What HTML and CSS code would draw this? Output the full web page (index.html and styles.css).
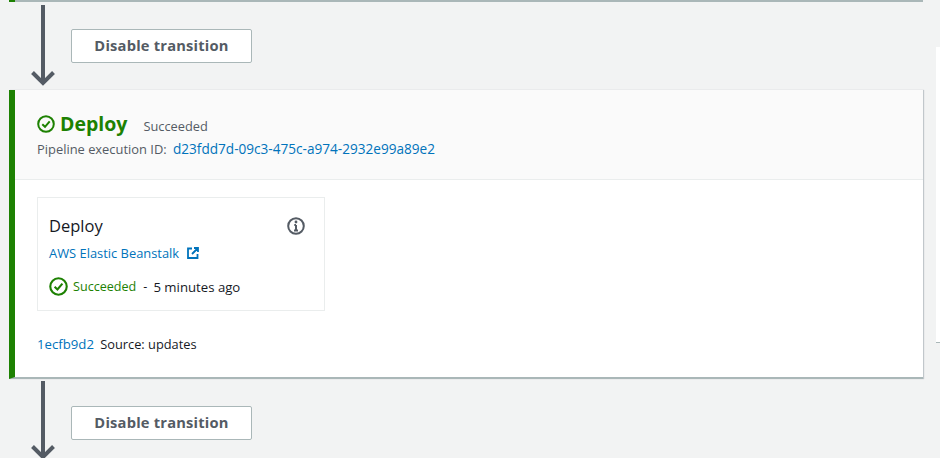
FILE: index.html
```html
<!DOCTYPE html>
<html lang="en">
<head>
    <meta charset="UTF-8">
    <meta name="viewport" content="width=device-width, initial-scale=1.0">
    <title>Deploy</title>
    <link rel="stylesheet" href="styles.css">
</head>
<body>
    <div class="layout">
        <main class="pipeline">
            <div class="stage-end"></div>

            <div class="transition transition-first">
                <svg class="arrow" width="26" height="82" viewBox="0 0 26 82">
                    <path d="M13 0V78M2.500 67.500L13 78L23.500 67.500" />
                </svg>
                <button class="transition-btn" type="button">Disable transition</button>
            </div>

            <section class="stage">
                <header class="stage-head">
                    <div class="stage-title">
                        <svg class="check check-large" viewBox="0 0 18 18">
                            <circle cx="9" cy="9" r="7.800" />
                            <path d="M5.300 9.200L8 11.800L12.700 6.300" />
                        </svg>
                        <h2>Deploy</h2>
                        <span class="stage-status">Succeeded</span>
                    </div>
                    <div class="execution">
                        <span>Pipeline execution ID:</span>
                        <a href="#">d23fdd7d-09c3-475c-a974-2932e99a89e2</a>
                    </div>
                </header>

                <div class="stage-body">
                    <div class="action">
                        <div class="action-top">
                            <h3>Deploy</h3>
                            <svg class="info" width="18" height="18" viewBox="0 0 18 18">
                                <circle cx="9" cy="9" r="7.800" />
                                <path d="M9 8V13.500M7 13.500H11M7.300 8H9" />
                                <circle class="info-dot" cx="9" cy="5" r="1.400" />
                            </svg>
                        </div>
                        <a class="provider" href="#">AWS Elastic Beanstalk
                            <svg width="12" height="12" viewBox="0 0 12 12">
                                <path d="M5 1.500H1V11H10.500V7M7 1H11V5M11 1L5 7" />
                            </svg>
                        </a>
                        <div class="action-status">
                            <svg class="check check-small" viewBox="0 0 18 18">
                                <circle cx="9" cy="9" r="7.800" />
                                <path d="M5.300 9.200L8 11.800L12.700 6.300" />
                            </svg>
                            <span class="ok">Succeeded</span>
                            <span class="dash">-</span>
                            <span class="ago">5 minutes ago</span>
                        </div>
                    </div>
                    <div class="revision">
                        <a href="#">1ecfb9d2</a>
                        <span>Source: updates</span>
                    </div>
                </div>
            </section>

            <div class="transition transition-last">
                <svg class="arrow" width="26" height="78" viewBox="0 0 26 78">
                    <path d="M13 0V76M2.500 65.500L13 76L23.500 65.500" />
                </svg>
                <button class="transition-btn" type="button">Disable transition</button>
            </div>
        </main>
        <aside class="side-panel"></aside>
    </div>
</body>
</html>
```

FILE: styles.css
```css
* {
    box-sizing: border-box;
}
html, body {
    height: 100%;
}
body {
    margin: 0;
    background-color: #f2f3f3;
    color: #16191f;
    font-family: "Open Sans", Arial, sans-serif;
    font-size: 13px;
    overflow: hidden;
}
a {
    color: #0073bb;
    text-decoration: none;
}
h2, h3 {
    margin: 0;
    font-weight: normal;
}
.layout {
    display: flex;
    height: 458px;
    padding-left: 9px;
}
.pipeline {
    width: 914px;
    flex-shrink: 0;
}
.stage-end {
    height: 2px;
    background-color: #aab7b8;
    border-left: 6px solid #1d8102;
}
.transition {
    display: flex;
    padding-left: 21px;
    overflow: hidden;
}
.transition-first {
    height: 88px;
    padding-top: 3px;
}
.transition-last {
    height: 79px;
    padding-top: 2px;
}
.arrow {
    flex-shrink: 0;
    fill: none;
    stroke: #545b64;
    stroke-width: 4;
}
.transition-btn {
    width: 181px;
    height: 34px;
    margin-left: 15px;
    padding: 0 0 2px;
    background: #ffffff;
    border: 1px solid #aab7b8;
    border-radius: 2px;
    color: #545b64;
    font-family: inherit;
    font-size: 14.700px;
    font-weight: bold;
    letter-spacing: 0.2px;
    cursor: pointer;
}
.transition-first .transition-btn {
    margin-top: 24px;
}
.transition-last .transition-btn {
    margin-top: 25px;
}
.stage {
    height: 289px;
    border-left: 6px solid #1d8102;
    border-bottom: 2px solid #aab7b8;
    background: #ffffff;
    box-shadow: 1px 0 1px rgba(0, 27, 43, 0.2);
}
.stage-head {
    height: 90px;
    padding: 22px 22px 0;
    background: #fafafa;
    border-bottom: 1px solid #eaeded;
}
.stage-title {
    display: flex;
    align-items: center;
    height: 24px;
}
.stage-title h2 {
    margin-left: 5px;
    color: #1d8102;
    font-size: 19.500px;
    font-weight: bold;
    line-height: 24px;
}
.stage-status {
    margin-left: 16px;
    margin-top: 3px;
    color: #545b64;
    font-size: 12.800px;
}
.execution {
    margin-top: 4px;
    color: #545b64;
    font-size: 12.900px;
    line-height: 18px;
}
.execution a {
    margin-left: 3px;
    font-size: 13.600px;
}
.check {
    flex-shrink: 0;
    fill: none;
    stroke: #1d8102;
    stroke-width: 2;
}
.check-large {
    width: 18px;
    height: 18px;
}
.check-small {
    width: 19px;
    height: 19px;
}
.stage-body {
    padding: 17px 22px 0;
}
.action {
    width: 288px;
    height: 114px;
    padding: 17px 11px 0;
    border: 1px solid #eaeded;
}
.action-top {
    display: flex;
    justify-content: space-between;
    align-items: center;
    padding-right: 8px;
}
.action-top h3 {
    font-size: 16.500px;
    line-height: 22px;
}
.info {
    fill: none;
    stroke: #545b64;
    stroke-width: 2;
}
.info-dot {
    fill: #545b64;
    stroke: none;
}
.provider {
    display: flex;
    align-items: center;
    gap: 8px;
    margin-top: 8px;
    font-size: 12.900px;
    line-height: 16px;
}
.provider svg {
    fill: none;
    stroke: #0073bb;
    stroke-width: 1.800;
}
.action-status {
    display: flex;
    align-items: center;
    margin-top: 16px;
    font-size: 12.600px;
    line-height: 18px;
}
.ok {
    margin-left: 5px;
    color: #1d8102;
}
.dash {
    margin: 0 6px 0 7px;
}
.ago {
    font-size: 13.200px;
}
.revision {
    margin-top: 24px;
    font-size: 12.800px;
    line-height: 18px;
}
.revision a {
    margin-right: 3px;
    font-size: 13.200px;
}
.side-panel {
    width: 4px;
    height: 296px;
    margin-top: 47px;
    margin-left: 13px;
    background: #ffffff;
    border-bottom: 1px solid #aab7b8;
}
```
